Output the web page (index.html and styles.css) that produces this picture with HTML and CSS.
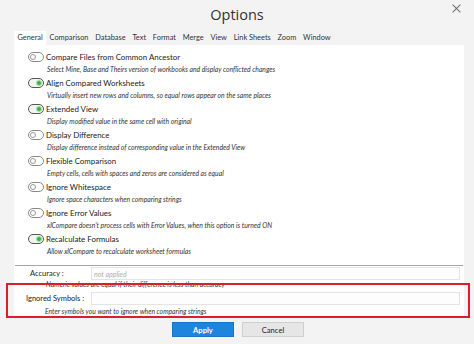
FILE: index.html
```html
<!DOCTYPE html>
<html lang="en">
<head>
    <meta charset="UTF-8">
    <title>Options</title>
    <link rel="stylesheet" href="styles.css">
</head>
<body>
    <div class="dialog">
        <div class="header">
            <h1 class="title">Options</h1>
            <!-- close button floats over the title bar -->
            <div class="close"></div>
        </div>

        <div class="tabs">
            <span class="tab active">General</span>
            <span class="tab">Comparison</span>
            <span class="tab">Database</span>
            <span class="tab">Text</span>
            <span class="tab">Format</span>
            <span class="tab">Merge</span>
            <span class="tab">View</span>
            <span class="tab">Link Sheets</span>
            <span class="tab">Zoom</span>
            <span class="tab">Window</span>
        </div>

        <div class="panel">
            <div class="option">
                <div class="option-head"><span class="toggle"></span>Compare Files from Common Ancestor</div>
                <div class="option-desc">Select Mine, Base and Theirs version of workbooks and display conflicted changes</div>
            </div>
            <div class="option">
                <div class="option-head"><span class="toggle on"></span>Align Compared Worksheets</div>
                <div class="option-desc">Virtually insert new rows and columns, so equal rows appear on the same places</div>
            </div>
            <div class="option">
                <div class="option-head"><span class="toggle on"></span>Extended View</div>
                <div class="option-desc">Display modified value in the same cell with original</div>
            </div>
            <div class="option">
                <div class="option-head"><span class="toggle"></span>Display Difference</div>
                <div class="option-desc">Display difference instead of corresponding value in the Extended View</div>
            </div>
            <div class="option">
                <div class="option-head"><span class="toggle"></span>Flexible Comparison</div>
                <div class="option-desc">Empty cells, cells with spaces and zeros are considered as equal</div>
            </div>
            <div class="option">
                <div class="option-head"><span class="toggle"></span>Ignore Whitespace</div>
                <div class="option-desc">Ignore space characters when comparing strings</div>
            </div>
            <div class="option">
                <div class="option-head"><span class="toggle"></span>Ignore Error Values</div>
                <div class="option-desc">xlCompare doesn't process cells with Error Values, when this option is turned ON</div>
            </div>
            <div class="option">
                <div class="option-head"><span class="toggle on"></span>Recalculate Formulas</div>
                <div class="option-desc">Allow xlCompare to recalculate worksheet formulas</div>
            </div>

            <div class="divider"></div>

            <div class="field accuracy">
                <label class="field-label">Accuracy :</label>
                <input class="field-input" type="text" placeholder="not applied">
            </div>
            <div class="field-desc short">Numeric values are equal if their difference is less than accuracy</div>

            <div class="field ignored">
                <label class="field-label">Ignored Symbols :</label>
                <input class="field-input" type="text">
            </div>
            <div class="field-desc">Enter symbols you want to ignore when comparing strings</div>

            <!-- red highlight around the ignored symbols setting -->
            <div class="highlight"></div>
        </div>

        <div class="buttons">
            <button class="btn primary">Apply</button>
            <button class="btn">Cancel</button>
        </div>
    </div>
</body>
</html>
```

FILE: styles.css
```css
body {
    margin: 0;
    background-color: #f3f3f3;
    font-family: Lato, "Open Sans", sans-serif;
    color: #222;
}
.dialog {
    width: 474px;
    height: 344px;
    overflow: hidden;
}
/* Header */
.header {
    position: relative;
    display: flex;
    justify-content: center;
    height: 31px;
}
.title {
    margin: 0;
    padding-top: 4px;
    font-family: "Open Sans", sans-serif;
    font-size: 14.5px;
    font-weight: normal;
    line-height: 22px;
    color: #333;
}
.close {
    position: absolute;
    top: 4px;
    right: 13px;
    width: 9px;
    height: 9px;
}
.close::before,
.close::after {
    content: "";
    position: absolute;
    top: 4px;
    left: -1px;
    width: 11px;
    height: 1px;
    background-color: #6e6e6e;
    transform: rotate(45deg);
}
.close::after {
    transform: rotate(-45deg);
}
/* Tabs */
.tabs {
    display: flex;
    padding-left: 14px;
    height: 14px;
}
.tab {
    padding: 0 3.4px;
    font-size: 7.4px;
    line-height: 14px;
    color: #333;
}
.tab.active {
    background-color: #fff;
}
/* Panel */
.panel {
    position: relative;
    margin: 0 10px 0 14px;
    padding: 5px 0 1px 0;
    background-color: #fff;
}
.option-head {
    display: flex;
    align-items: center;
    height: 13px;
    padding-left: 14px;
    font-size: 7.9px;
    color: #222;
}
.option-desc {
    height: 13px;
    line-height: 13px;
    padding-left: 33px;
    font-size: 6.8px;
    font-style: italic;
    color: #333;
    white-space: nowrap;
}
/* Toggle switch */
.toggle {
    position: relative;
    box-sizing: border-box;
    width: 16px;
    height: 10px;
    margin-right: 2px;
    border: 1px solid #8a8a8a;
    border-radius: 5px;
    background-color: #fff;
}
.toggle::after {
    content: "";
    position: absolute;
    top: 1px;
    left: 1px;
    box-sizing: border-box;
    width: 6px;
    height: 6px;
    border: 1px solid #9a9a9a;
    border-radius: 50%;
}
.toggle.on {
    border-color: #555;
    background-color: #eef6ee;
}
.toggle.on::after {
    left: 7px;
    border: 1px solid #a8dca8;
    background-color: #3cb44b;
}
.divider {
    height: 1px;
    margin: 7px 1px 0 1px;
    background-color: #a6a6a6;
}
/* Fields */
.field {
    display: flex;
    align-items: center;
    height: 13px;
    margin-top: 1px;
}
.field.ignored {
    margin-top: 2px;
}
.field-label {
    flex: none;
    width: 77px;
    padding-left: 12px;
    box-sizing: border-box;
    font-size: 7.5px;
    color: #222;
    white-space: nowrap;
}
.accuracy .field-label {
    padding-left: 16px;
}
.field-input {
    box-sizing: border-box;
    width: 369px;
    height: 13px;
    padding: 0 2px;
    border: 1px solid #e4e4e4;
    background-color: #fdfdfd;
    font-family: inherit;
    font-size: 7px;
    font-style: italic;
    outline: none;
}
.field-input::placeholder {
    color: #b0b0b0;
}
.field-desc {
    height: 12px;
    line-height: 12px;
    padding-left: 31px;
    font-size: 6.8px;
    font-style: italic;
    color: #333;
}
.field-desc.short {
    height: 10px;
    line-height: 8px;
    padding-left: 32px;
}
.highlight {
    position: absolute;
    left: -8px;
    right: -6px;
    bottom: 0;
    height: 35px;
    box-sizing: border-box;
    border: 2px solid #d9202a;
}
/* Buttons */
.buttons {
    display: flex;
    justify-content: center;
    gap: 8px;
    margin-top: 4px;
    padding-left: 2px;
}
.btn {
    width: 62px;
    height: 15px;
    padding: 0;
    border: 1px solid #cfcfcf;
    background-color: #e6e6e6;
    font-family: inherit;
    font-size: 7.6px;
    color: #222;
}
.btn.primary {
    border-color: #1a73c8;
    background-color: #1e84dc;
    color: #fff;
    font-weight: bold;
}
```
